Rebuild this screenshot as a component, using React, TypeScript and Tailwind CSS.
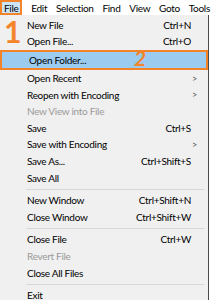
import React from "react";

type Item =
  | { kind: "sep" }
  | { kind: "item"; label: string; shortcut?: string; sub?: boolean; disabled?: boolean; active?: boolean };

const items: Item[] = [
  { kind: "item", label: "New File", shortcut: "Ctrl+N" },
  { kind: "item", label: "Open File...", shortcut: "Ctrl+O" },
  { kind: "item", label: "Open Folder...", active: true },
  { kind: "item", label: "Open Recent", sub: true },
  { kind: "item", label: "Reopen with Encoding", sub: true },
  { kind: "item", label: "New View into File", disabled: true },
  { kind: "item", label: "Save", shortcut: "Ctrl+S" },
  { kind: "item", label: "Save with Encoding", sub: true },
  { kind: "item", label: "Save As...", shortcut: "Ctrl+Shift+S" },
  { kind: "item", label: "Save All" },
  { kind: "sep" },
  { kind: "item", label: "New Window", shortcut: "Ctrl+Shift+N" },
  { kind: "item", label: "Close Window", shortcut: "Ctrl+Shift+W" },
  { kind: "sep" },
  { kind: "item", label: "Close File", shortcut: "Ctrl+W" },
  { kind: "item", label: "Revert File", disabled: true },
  { kind: "item", label: "Close All Files" },
  { kind: "sep" },
  { kind: "item", label: "Exit" },
];

const menus = ["File", "Edit", "Selection", "Find", "View", "Goto", "Tools"];

export default function App() {
  return (
    <div
      className="relative w-[212px] h-[300px] overflow-hidden bg-white text-[10px] tracking-[-0.3px] text-black"
      style={{ fontFamily: 'Lato, "Noto Sans", sans-serif' }}
    >
      {/* menu bar */}
      <div className="flex h-[15px] items-center justify-between bg-white pr-[2px] leading-none">
        {menus.map((m, i) => (
          <span
            key={m}
            className={
              i === 0
                ? "flex h-[15px] items-center border-2 border-[#f4842a] bg-[#cce4f7] px-[2px]"
                : ""
            }
          >
            {m}
          </span>
        ))}
      </div>

      {/* dropdown */}
      <div className="h-[285px] w-[209px] border-r border-[#4a4a4a] bg-[#f0f0f0] pt-[2px]">
        {items.map((it, i) =>
          it.kind === "sep" ? (
            <div key={i} className="py-[2.5px] pl-[26px] pr-[4px]">
              <div className="h-px bg-[#d7d7d7]" />
            </div>
          ) : (
            <div
              key={i}
              className={
                "flex h-[16.6px] items-center pl-[27px] pr-[17px] " +
                (it.active ? "border-2 border-[#f4842a] bg-[#9ccbf0] pl-[25px] h-[20px]" : "") +
                (it.disabled ? " text-[#9a9a9a]" : "")
              }
            >
              <span className="flex-1">{it.label}</span>
              {it.shortcut ? <span>{it.shortcut}</span> : null}
              {it.sub ? <span className="-mr-[6px] text-[9px] text-[#555]">&gt;</span> : null}
            </div>
          )
        )}
      </div>

      {/* step markers */}
      <span className="absolute left-[4px] top-[16px] text-[30px] font-bold leading-none text-[#f4842a]">1</span>
      <span className="absolute left-[134px] top-[47px] text-[21px] font-bold italic leading-none text-[#f4842a]">2</span>
    </div>
  );
}
